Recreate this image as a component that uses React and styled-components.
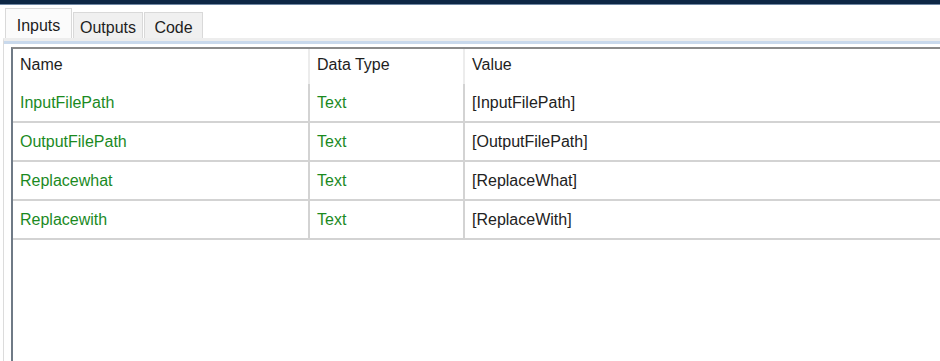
import React from 'react';
import styled, { createGlobalStyle } from 'styled-components';

const GlobalStyle = createGlobalStyle`
  html, body {
    margin: 0;
    padding: 0;
    background: #ffffff;
  }
  body {
    font-family: "Liberation Sans", Arial, sans-serif;
  }
`;

const tabs = [
  { label: 'Inputs', width: 67, active: true },
  { label: 'Outputs', width: 70 },
  { label: 'Code', width: 59 },
];

const rows = [
  { name: 'InputFilePath', type: 'Text', value: '[InputFilePath]' },
  { name: 'OutputFilePath', type: 'Text', value: '[OutputFilePath]' },
  { name: 'Replacewhat', type: 'Text', value: '[ReplaceWhat]' },
  { name: 'Replacewith', type: 'Text', value: '[ReplaceWith]' },
];

const App = () => {
  return (
    <Window>
      <GlobalStyle />
      <TitleBar />
      <TabStrip>
        {tabs.map((t) => (
          <Tab key={t.label} $active={t.active} $width={t.width}>
            {t.label}
          </Tab>
        ))}
      </TabStrip>
      <TabPage>
        <Grid>
          <HeaderCell>Name</HeaderCell>
          <HeaderCell>Data Type</HeaderCell>
          <HeaderCell $last>Value</HeaderCell>
          {rows.map((r) => (
            <React.Fragment key={r.name}>
              <Cell $green>{r.name}</Cell>
              <Cell $green>{r.type}</Cell>
              <Cell $last>{r.value}</Cell>
            </React.Fragment>
          ))}
        </Grid>
      </TabPage>
    </Window>
  );
};

export default App;

const Window = styled.div`
  width: 940px;
  height: 361px;
  overflow: hidden;
  display: flex;
  flex-direction: column;
  background: #ffffff;
`;

const TitleBar = styled.div`
  height: 4px;
  background: #0d2745;
  border-bottom: 1px solid #7088a4;
  flex-shrink: 0;
`;

const TabStrip = styled.div`
  display: flex;
  align-items: flex-end;
  height: 33px;
  padding-left: 5px;
  flex-shrink: 0;
`;

const Tab = styled.div`
  box-sizing: border-box;
  width: ${(p) => p.$width}px;
  height: ${(p) => (p.$active ? '30px' : '26px')};
  padding-top: ${(p) => (p.$active ? '7px' : '5px')};
  margin-right: 1px;
  text-align: center;
  background: ${(p) => (p.$active ? '#fbfbfb' : '#f0f0f0')};
  border: 1px solid #d9d9d9;
  border-bottom: none;
  font-size: 16px;
  color: #1e1e1e;
  line-height: 20px;
`;

const TabPage = styled.div`
  flex: 1;
  display: flex;
  flex-direction: column;
  margin-left: 3px;
  border-left: 1px solid #dcdcdc;
  border-top: 3px solid #ededed;
  background: #ffffff;
  padding: 0 0 0 7px;
  &::before {
    content: '';
    display: block;
    height: 3px;
    background: #c9d9ec;
    margin-left: -7px;
    margin-bottom: 3px;
  }
`;

const Grid = styled.div`
  flex: 1;
  display: grid;
  grid-template-columns: 297px 155px 1fr;
  grid-template-rows: 35px repeat(4, 39px) 1fr;
  align-content: start;
  border-top: 2px solid #8a8a8a;
  border-left: 2px solid #6f7a86;
  margin-right: -20px;
`;

const HeaderCell = styled.div`
  box-sizing: border-box;
  display: flex;
  align-items: center;
  padding: 0 0 4px 7px;
  font-size: 16px;
  color: #1e1e1e;
  border-right: ${(p) => (p.$last ? 'none' : '2px solid #ececec')};
`;

const Cell = styled.div`
  box-sizing: border-box;
  display: flex;
  align-items: center;
  padding: 0 0 0 7px;
  font-size: 16px;
  color: ${(p) => (p.$green ? '#1b8a1f' : '#222222')};
  border-right: ${(p) => (p.$last ? 'none' : '2px solid #d3d3d3')};
  border-bottom: 2px solid #d3d3d3;
`;
